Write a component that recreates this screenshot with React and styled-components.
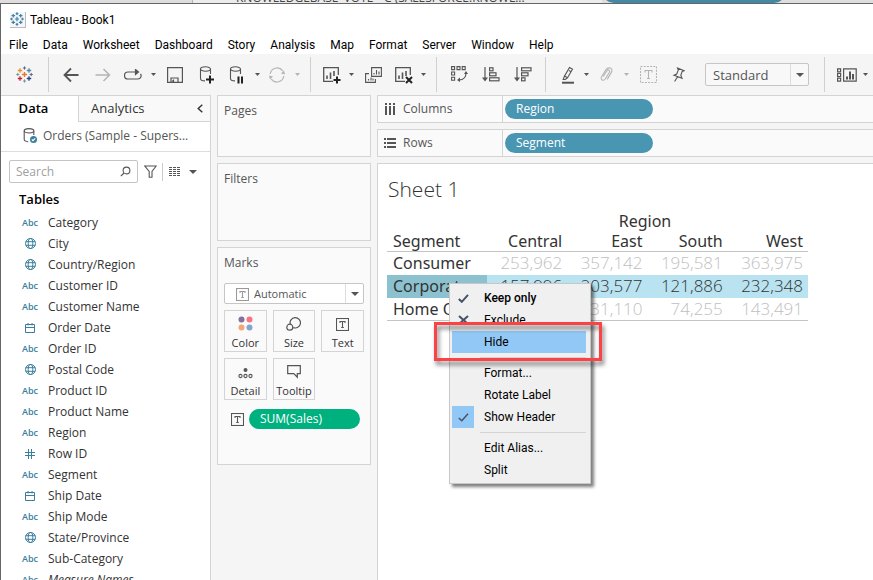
import React from "react";
import styled, { createGlobalStyle, css } from "styled-components";

const SANS = '"Open Sans", "Noto Sans", sans-serif';
const MENU = 'Roboto, "Noto Sans", sans-serif';
const LINE = "#d4d4d4";
const INK = "#555";
const BLUE = "#3b7e9c";

const GlobalStyle = createGlobalStyle`
  * { box-sizing: border-box; }
  body { margin: 0; overflow: hidden; background: #fff; font: 12px/16px ${SANS}; color: #333; }
  button, input, select { font: inherit; color: inherit; margin: 0; padding: 0; }
  button { background: none; border: 0; }
  svg { display: block; flex: none; }
  h1, h2, ul { margin: 0; padding: 0; list-style: none; font-weight: 400; }
`;

const Page = styled.div`
  height: 100vh;
  display: flex;
  flex-direction: column;
  overflow: hidden;
`;
const Behind = styled.div`
  flex: none;
  height: 3px;
  display: flex;
  align-items: flex-end;
  overflow: hidden;
  background: #dedede;
`;
const BehindShelf = styled.div`
  flex: 0 0 410px;
  margin-left: 192px;
  height: 24px;
  padding-left: 43px;
  border-left: 1px solid #b5b5b5;
  line-height: 38px;
  background: #ececec;
  color: #444;
  white-space: nowrap;
`;
const BehindPill = styled.div`
  flex: 0 0 184px;
  height: 24px;
  border-radius: 12px;
  background: #4389a5;
`;
const Window = styled.div`
  flex: 1;
  min-height: 0;
  display: flex;
  flex-direction: column;
  border-top: 1px solid #666;
  border-left: 1px solid #666;
  background: #fff;
`;
const TitleBar = styled.header`
  flex: none;
  height: 31px;
  display: flex;
  align-items: center;
  gap: 4px;
  padding: 0 9px;
  font: 12px/16px ${MENU};
  color: #000;
`;
const AppIcon = styled.span`
  padding: 0 1px 1px 0;
  background: #f6f6f6;
  border: solid #bbb;
  border-width: 0 1px 1px 0;
`;
const MenuBar = styled.nav`
  flex: none;
  height: 19px;
  display: flex;
  align-items: center;
  gap: 15px;
  padding: 0 8px;
  font: 12px/16px ${MENU};
  color: #000;
`;
const Toolbar = styled.div`
  flex: none;
  height: 41px;
  display: flex;
  align-items: center;
  padding-left: 11px;
  background: #f5f5f5;
  color: ${INK};
`;
const Tool = styled.button`
  flex: none;
  width: 24px;
  height: 24px;
  display: grid;
  place-items: center;
  margin-left: ${(p) => p.$gap || 0}px;
  color: ${(p) => (p.disabled ? "#b4b4b4" : INK)};
`;
const CaretButton = styled(Tool)`
  width: 12px;
`;
const Divider = styled.span`
  flex: none;
  width: 1px;
  height: 35px;
  margin-left: ${(p) => p.$gap}px;
  background: #d0d0d0;
`;
const SelectBox = styled.label`
  position: relative;
  flex: none;
  display: block;
  height: ${(p) => (p.$compact ? 21 : 23)}px;
  width: ${(p) => (p.$compact ? "auto" : "104px")};
  margin-left: ${(p) => p.$gap || 0}px;
  border: 1px solid #c6c6c6;
  border-radius: 2px;
  background: ${(p) => (p.$compact ? "#fff" : "#f8f8f8")};
  select {
    appearance: none;
    width: 100%;
    height: 100%;
    padding: 0 20px 0 ${(p) => (p.$compact ? 29 : 7)}px;
    border: 0;
    background: transparent;
    font-size: ${(p) => (p.$compact ? 11 : 13)}px;
    color: ${INK};
  }
`;
const SelectArrow = styled.span`
  position: absolute;
  inset: 0 0 0 auto;
  width: 18px;
  display: grid;
  place-items: center;
  border-left: 1px solid #ddd;
  color: ${INK};
  pointer-events: none;
`;
const SelectIcon = styled.span`
  position: absolute;
  left: 11px;
  top: 4px;
  color: #999;
  pointer-events: none;
`;

const Workspace = styled.div`
  flex: 1;
  min-height: 0;
  display: grid;
  grid-template-columns: 210px 154px minmax(0, 1fr);
  gap: 6px;
  background: #f5f5f5;
`;
const Sidebar = styled.aside`
  min-height: 0;
  overflow: hidden;
  background: #fff;
  border: solid ${LINE};
  border-width: 1px 1px 0 0;
`;
const Tabs = styled.div`
  display: flex;
  height: 26px;
  font-size: 13px;
  line-height: 24px;
`;
const DataTab = styled.button`
  width: 77px;
  padding: 0 12px 2px 0;
  font-weight: 600;
  color: #000;
`;
const AnalyticsTab = styled.div`
  flex: 1;
  display: flex;
  justify-content: space-between;
  align-items: center;
  padding: 0 7px 1px 12px;
  border: solid ${LINE};
  border-width: 0 0 1px 1px;
  background: #f9f9f9;
`;
const Source = styled.div`
  height: 30px;
  display: flex;
  align-items: center;
  gap: 5px;
  padding: 0 0 2px 22px;
  border-bottom: 1px solid #ddd;
  color: #555;
`;
const SearchRow = styled.div`
  display: flex;
  align-items: center;
  gap: 6px;
  padding: 8px 8px 4px;
  color: ${INK};
`;
const SearchBox = styled.label`
  width: 129px;
  height: 23px;
  display: flex;
  align-items: center;
  padding: 0 6px;
  border: 1px solid #c4c4c4;
  border-radius: 2px;
  input {
    flex: 1;
    min-width: 0;
    border: 0;
    outline: 0;
    background: none;
  }
  input::placeholder { color: #a0a0a0; }
`;
const SearchTool = styled.button`
  width: 12px;
  height: 20px;
  display: grid;
  place-items: center;
  color: ${INK};
`;
const SearchDivider = styled.span`
  width: 1px;
  height: 18px;
  background: #ccc;
`;
const TablesHeading = styled.h2`
  padding: 2px 0 3px 18px;
  font-size: 13px;
  line-height: 20px;
  font-weight: 600;
  color: #000;
`;
const Field = styled.li`
  height: 21px;
  display: grid;
  grid-template-columns: 18px 1fr;
  align-items: center;
  column-gap: 9px;
  padding-left: 20px;
  font-style: ${(p) => (p.$italic ? "italic" : "normal")};
  white-space: nowrap;
`;
const FieldIcon = styled.span`
  display: grid;
  place-items: center;
  color: ${BLUE};
  font: 600 9px/12px ${SANS};
`;

const Cards = styled.div`
  display: flex;
  flex-direction: column;
  gap: 6px;
`;
const Card = styled.section`
  flex: none;
  min-height: ${(p) => p.$height}px;
  padding: 7px 6px;
  border: 1px solid ${LINE};
  background: #fafafa;
  color: #555;
  h2 { font-size: 12px; }
`;
const MarkGrid = styled.div`
  display: grid;
  grid-template-columns: repeat(3, 1fr);
  gap: 6px;
  margin: 6px 0;
`;
const MarkButton = styled.button`
  height: 42px;
  display: flex;
  flex-direction: column;
  align-items: center;
  justify-content: flex-end;
  gap: 4px;
  border: 1px solid ${LINE};
  color: ${INK};
  font-size: 11px;
  span { color: #333; }
`;
const MarksSelectWrap = styled.div`
  margin-top: 12px;
`;
const PillRow = styled.div`
  display: flex;
  align-items: center;
  gap: 5px;
  padding: 3px 4px 0 7px;
`;
const Pill = styled.button`
  flex: ${(p) => (p.$green ? "1" : "0 0 148px")};
  height: 20px;
  padding: 0 11px;
  border-radius: 10px;
  background: ${(p) => (p.$green ? "#00b180" : "#4996b2")};
  color: #fff;
  font-weight: 500;
  text-align: left;
`;

const Main = styled.main`
  display: flex;
  flex-direction: column;
  gap: 6px;
  min-width: 0;
`;
const Shelf = styled.section`
  flex: none;
  height: 28px;
  display: flex;
  align-items: center;
  border: solid ${LINE};
  border-width: 1px 0 1px 1px;
  background: #fafafa;
`;
const ShelfLabel = styled.div`
  flex: 0 0 125px;
  height: 100%;
  display: flex;
  align-items: center;
  gap: 7px;
  margin-right: 2px;
  padding-left: 6px;
  border-right: 1px solid ${LINE};
  color: #555;
`;
const Sheet = styled.section`
  position: relative;
  flex: 1;
  padding: 13px 9px;
  border: solid ${LINE};
  border-width: 1px 0 0 1px;
  background: #fff;
`;
const SheetTitle = styled.h1`
  padding-left: 1px;
  font: 300 21px/24px "Open Sans", sans-serif;
`;
const Crosstab = styled.table`
  width: 421px;
  margin-top: 10px;
  border-collapse: collapse;
  table-layout: fixed;
  font: 16px/20px "Noto Sans", sans-serif;
  color: #333;
  border-bottom: 1px solid #c4c4c4;
  thead tr:last-child { border-bottom: 1px solid #c4c4c4; }
`;
const HeadCell = styled.th`
  height: 20px;
  width: ${(p) => (p.$first ? "100px" : "auto")};
  padding: ${(p) => (p.$first ? "0 0 0 6px" : "0 5px 0 0")};
  text-align: ${(p) => p.$align || "right"};
  font-weight: 400;
`;
const RowHead = styled.th`
  height: 23px;
  padding: 0 0 0 6px;
  text-align: left;
  font-weight: 400;
  white-space: nowrap;
  background: ${(p) => (p.$on ? "#8cc2d0" : "none")};
`;
const Value = styled.td`
  padding: 0 5px 0 0;
  text-align: right;
  font: 300 17px/20px "Open Sans", sans-serif;
  color: ${(p) => (p.$on ? "#333" : "#c0c0c0")};
  background: ${(p) => (p.$on ? "#b9e3f0" : "none")};
`;

const ContextMenu = styled.div`
  position: absolute;
  left: 71px;
  top: 119px;
  width: 142px;
  padding: 3px 4px 2px 2px;
  border: 1px solid #c8c8c8;
  background: #f0f0f0;
  box-shadow: 3px 3px 3px rgba(0, 0, 0, 0.5);
  font: 12px/16px ${MENU};
  color: #000;
`;
const MenuItem = styled.button`
  position: relative;
  width: 100%;
  height: 22px;
  display: grid;
  grid-template-columns: 22px 1fr;
  align-items: center;
  column-gap: 10px;
  text-align: left;
  font-weight: ${(p) => (p.$bold ? 500 : 400)};
  ${(p) => p.$active && css`background: #91c8f6;`}
`;
const MenuMark = styled.span`
  width: 22px;
  height: 22px;
  display: grid;
  place-items: center;
  color: #465266;
  background: ${(p) => (p.$on ? "#91c8f6" : "none")};
`;
const MenuRule = styled.div`
  height: 1px;
  margin: 4px 0 4px 28px;
  background: #d4d4d4;
`;
const Callout = styled.span`
  position: absolute;
  z-index: 1;
  inset: -9px -16px -8px -18px;
  border: 3px solid #fb4245;
  filter: drop-shadow(2px 4px 2px rgba(0, 0, 0, 0.5));
  pointer-events: none;
`;

/* ---------- icons ---------- */
const Svg = ({ w = 16, h = w, children, sw = 1.3, ...rest }) => (
  <svg width={w} height={h} viewBox={`0 0 ${w} ${h}`} fill="none" stroke="currentColor" strokeWidth={sw} aria-hidden="true" {...rest}>
    {children}
  </svg>
);
const Caret = ({ w = 5 }) => (
  <svg width={w} height={w === 5 ? 3 : 4} viewBox="0 0 8 4" preserveAspectRatio="none" fill="currentColor" aria-hidden="true">
    <path d="M0 0h8L4 4z" />
  </svg>
);
const plus = (x, y, r) => `M${x - r} ${y}h${2 * r}M${x} ${y - r}v${2 * r}`;
const CROSSES = [
  [8.5, 8.5, 2.6, "#e8762d", 1.4],
  [4, 4.5, 2.2, "#eb912c", 1.3],
  [13, 4.5, 2.2, "#59879b", 1.3],
  [4, 12.5, 2.2, "#c72035", 1.3],
  [13, 12.5, 2.2, "#1f447e", 1.3],
  [8.5, 2, 1.6, "#5b6591", 1],
  [8.5, 15, 1.6, "#7099a6", 1],
  [1.8, 8.5, 1.6, "#7099a6", 1],
  [15.2, 8.5, 1.6, "#5b6591", 1],
];
const Logo = ({ mono }) => (
  <svg width={mono ? 14 : 17} height={mono ? 14 : 17} viewBox="0 0 17 17" fill="none" aria-hidden="true">
    {CROSSES.map(([x, y, r, c, s]) => (
      <path key={`${x}-${y}`} d={plus(x, y, r)} stroke={mono ? "#3d83b0" : c} strokeWidth={mono ? 1.5 : s} />
    ))}
  </svg>
);
const Back = () => <Svg w={16} sw={1.8}><path d="M15.5 8H1.5M8 1.5L1.5 8L8 14.5" /></Svg>;
const Forward = () => <Svg w={16} sw={1.5}><path d="M.5 8h14M8.5 2l6 6l-6 6" /></Svg>;
const Redo = () => (
  <Svg w={18} h={12} sw={1.2}>
    <path d="M13 3H4a3.5 3.5 0 0 0 0 7h10a3.3 3.3 0 0 0 2.5-5.2" />
    <path d="M11.5 .5L14.5 3L11.5 5.5z" fill="currentColor" />
  </Svg>
);
const Save = () => <Svg w={16} sw={1.2}><path d="M.6.6h14.8v14.8H.6zM4 15v-4h7v4M6 13v2" /><path d="M6.5 12.5v2.5" sw={2} /></Svg>;
const Cylinder = ({ children }) => (
  <Svg w={18} sw={1.1}>
    <ellipse cx="7.5" cy="3" rx="5" ry="2.2" />
    <path d="M2.5 3v9.5c0 1.5 2 2.4 4.5 2.4M12.5 3v5" />
    {children}
  </Svg>
);
const AddData = () => <Cylinder><path d="M12 9.5v8M8 13.5h8" stroke="#222" strokeWidth="2" /></Cylinder>;
const PauseData = () => <Cylinder><path d="M10.5 10.5v7M14 10.5v7" stroke="#222" strokeWidth="2" /></Cylinder>;
const Refresh = () => (
  <Svg w={18} sw={1.2}>
    <path d="M2.2 8a7 7 0 0 1 12.5-3.2M15.8 10a7 7 0 0 1-12.5 3.2" />
    <path d="M17 8.5l-4-1l3-3zM1 9.5l4 1l-3 3z" fill="currentColor" stroke="none" />
  </Svg>
);
const ChartBox = ({ children }) => (
  <Svg w={19} h={18} sw={1.3}>
    <path d="M11 15.4H1.7V1.7H16.3V9" />
    <path d="M5 13V9.5M8.5 13V6.5M12 10V5" strokeWidth="1.6" />
    {children}
  </Svg>
);
const NewSheet = () => <ChartBox><path d="M15 10.5v7M11.5 14h7" stroke="#222" strokeWidth="2" /></ChartBox>;
const ClearSheet = () => <ChartBox><path d="M12 11l6 6M18 11l-6 6" stroke="#222" strokeWidth="2" /></ChartBox>;
const Duplicate = () => (
  <Svg w={17} h={16} sw={1.1}>
    <path d="M6.6.6h9.8v8.8H6.6zM4 6.6H.6v8.8h9.8V12" />
    <path d="M9 7.5V6M11.5 7.5V3M14 7.5V4.5M3.5 13.5V12M6 13.5V10.5M8 13.5v-2" />
  </Svg>
);
const Swap = () => (
  <Svg w={17} sw={1.1}>
    <path d="M.6.6h3v3h-3zM6 .6h3v3H6zM11.2.6h3v3h-3zM.6 6h3v3h-3zM.6 11.2h3v3h-3z" />
    <path d="M15 7c0 4.5-2.5 6.8-7 7" />
    <path d="M13 8l2-3l2 3zM9 11.5l-3 2.5l3 2z" fill="currentColor" stroke="none" />
  </Svg>
);
const Sort = ({ desc }) => {
  const widths = desc ? [10, 7, 4] : [4, 7, 10];
  return (
    <Svg w={18} h={15} sw={1.2}>
      <path d="M3 0v13" />
      <path d="M0 10.5h6L3 14.5z" fill="currentColor" stroke="none" />
      {widths.map((w, i) => <rect key={i} x="7.6" y={0.8 + i * 5} width={w - 0.6} height="3" />)}
    </Svg>
  );
};
const Highlighter = () => (
  <Svg w={14} h={18} sw={1.1}>
    <path d="M8.5 1.5l3 1.7l-5 8.6l-3-1.7zM3.5 10l-1.3 3.5h2l2.3-1.7M8 4.5l2 1.2" />
    <path d="M1 16.7h12" strokeWidth="2" />
  </Svg>
);
const Clip = () => <Svg w={13} h={15} sw={1.1}><path d="M3.3 9.5L7 3.8c1.2-1.8 3.5-.4 2.4 1.5L5.4 11.8c-2 2.8-5.4.8-3.8-2L6 2.6C7.7.1 11 .5 11.8 2.4c.4 1 .2 2-.4 3l-4.2 7" /></Svg>;
const TextGlyph = ({ dashed, w = 13 }) => (
  <Svg w={w} sw={1.1}>
    <rect x=".5" y=".5" width={w - 1} height={w - 1} strokeDasharray={dashed ? "2 1.2" : undefined} />
    <path d={dashed ? "M5 6.5V4.5h7v2M8.5 4.5v8M7 12.5h3" : "M4 5V3.5h5V5M6.5 3.5v6M5.2 9.5h2.6"} />
  </Svg>
);
const PinIcon = () => <Svg w={13} h={15} sw={1.1}><path d="M5.5 1l6.5 2.7l-1.8.7l-1.4 3.8l1.2 3L2 8.2l2.7-1.2l1.6-3.9zM5.6 9.7L2.6 14.5" /></Svg>;
const ShowMe = () => (
  <Svg w={20} h={14} sw={1.2}>
    <path d="M.6.8h3v3h-3zM.6 5.5h3v3h-3zM.6 10.2h3v3h-3zM6.6.8h12.6v12.4H6.6z" />
    <path d="M10 11.5V8.5M13 11.5V3.5M16 11.5V6" strokeWidth="2" />
  </Svg>
);
const Globe = () => (
  <Svg w={11} sw={1}>
    <circle cx="5.5" cy="5.5" r="5" />
    <ellipse cx="5.5" cy="5.5" rx="2.3" ry="5" />
    <path d="M.8 3.7h9.4M.8 7.3h9.4" />
  </Svg>
);
const Calendar = () => <Svg w={10} sw={1}><path d="M.5 1.5h9v8h-9zM.5 4.5h9M3 0v2.5M7 0v2.5" /></Svg>;
const Hash = () => <Svg w={10} sw={1}><path d="M3.5 0v10M6.5 0v10M0 3.5h10M0 6.5h10" /></Svg>;
const SourceIcon = () => (
  <Svg w={15} h={16} sw={1.1}>
    <ellipse cx="6" cy="2.8" rx="4.8" ry="2.2" />
    <path d="M1.2 2.8v8.5c0 1.4 1.6 2.2 4 2.4M10.8 2.8V7" />
    <circle cx="10.5" cy="11.5" r="3.5" fill={BLUE} stroke="none" />
    <path d="M8.8 11.5l1.2 1.2l2.2-2.3" stroke="#fff" />
  </Svg>
);
const Magnifier = () => <Svg w={11} sw={1.1}><circle cx="6.5" cy="4.5" r="3.4" /><path d="M4 7L.8 10.2" /></Svg>;
const Funnel = () => <Svg w={13} sw={1.1}><path d="M.8 1h11.4L8 6.5v5.8H5.2V6.5z" /></Svg>;
const ListIcon = () => <Svg w={12} h={10} sw={1}><path d="M0 .5h12M0 2.5h12M0 4.5h12M0 6.5h12M0 8.5h12" strokeDasharray="3 1" /></Svg>;
const Chevron = () => <Svg w={6} h={9} sw={1.4}><path d="M5.3.7L1.2 4.5l4.1 3.8" /></Svg>;
const ColumnsIcon = () => <Svg w={12} sw={2}><path d="M2 0v2M6 0v2M10 0v2M2 3v9M6 3v9M10 3v9" /></Svg>;
const RowsIcon = () => <Svg w={12} h={10} sw={2}><path d="M0 1h2M0 5h2M0 9h2M3 1h9M3 5h9M3 9h9" /></Svg>;
const Colors = () => (
  <Svg w={15} stroke="none">
    <circle cx="3.5" cy="3.5" r="3" fill="#86719b" /><circle cx="11.5" cy="3.5" r="3" fill="#fb7281" />
    <circle cx="3.5" cy="11.5" r="3" fill="#f3a678" /><circle cx="11.5" cy="11.5" r="3" fill="#82a6cb" />
  </Svg>
);
const SizeIcon = () => <Svg w={15} sw={1.2}><path d="M4.3 8.3a5.2 5.2 0 1 1 3 3.3" /><circle cx="3.8" cy="11.2" r="3" /></Svg>;
const DetailIcon = () => (
  <Svg w={15} h={13} sw={1.1}>
    <circle cx="7.5" cy="4" r="2" fill="currentColor" stroke="none" />
    <circle cx="2.5" cy="10" r="1.6" /><circle cx="7.5" cy="10" r="1.6" /><circle cx="12.5" cy="10" r="1.6" />
  </Svg>
);
const TooltipIcon = () => <Svg w={14} h={15} sw={1.2}><path d="M.7 1.6h12.6v8h-3v3.6l-3.5-3.6H.7z" /></Svg>;
const Check = ({ bold }) => <Svg w={11} h={9} sw={bold ? 2 : 1.5}><path d="M.8 5l3 2.8L10 .8" /></Svg>;
const Cross = () => <Svg w={11} h={10} sw={2}><path d="M1 1l9 8M10 1L1 9" /></Svg>;

/* ---------- data ---------- */
const MENUS = ["File", "Data", "Worksheet", "Dashboard", "Story", "Analysis", "Map", "Format", "Server", "Window", "Help"];
const FIELDS = [
  ["Category"], ["City", Globe], ["Country/Region", Globe], ["Customer ID"], ["Customer Name"],
  ["Order Date", Calendar], ["Order ID"], ["Postal Code", Globe], ["Product ID"], ["Product Name"],
  ["Region"], ["Row ID", Hash], ["Segment"], ["Ship Date", Calendar], ["Ship Mode"],
  ["State/Province", Globe], ["Sub-Category"], ["Measure Names", null, true],
];
const MARKS = [["Color", Colors], ["Size", SizeIcon], ["Text", TextGlyph], ["Detail", DetailIcon], ["Tooltip", TooltipIcon]];
const REGIONS = ["Central", "East", "South", "West"];
const ROWS = [
  ["Consumer", ["253,962", "357,142", "195,581", "363,975"]],
  ["Corporate", ["157,996", "203,577", "121,886", "232,348"], true],
  ["Home Office", ["91,213", "131,110", "74,255", "143,491"]],
];

const DropCaret = ({ gap, label, disabled }) => (
  <CaretButton $gap={gap} disabled={disabled} aria-label={label}><Caret /></CaretButton>
);

export default function App() {
  return (
    <Page>
      <GlobalStyle />
      <Behind>
        <BehindShelf>KNOWLEDGEBASE_VOTE__C (SALESFORCE.KNOWL...</BehindShelf>
        <BehindPill />
      </Behind>
      <Window>
        <TitleBar><AppIcon><Logo mono /></AppIcon>Tableau - Book1</TitleBar>
        <MenuBar>{MENUS.map((m) => <button key={m}>{m}</button>)}</MenuBar>
        <Toolbar>
          <Tool aria-label="Start page"><Logo /></Tool>
          <Divider $gap={12} />
          <Tool $gap={10} aria-label="Undo"><Back /></Tool>
          <Tool $gap={8} disabled aria-label="Redo"><Forward /></Tool>
          <Tool $gap={6} aria-label="Replay"><Redo /></Tool>
          <DropCaret gap={2} label="Replay options" />
          <Tool $gap={4} aria-label="Save"><Save /></Tool>
          <Tool $gap={8} aria-label="New data source"><AddData /></Tool>
          <Tool $gap={6} aria-label="Pause auto updates"><PauseData /></Tool>
          <DropCaret gap={2} label="Pause options" />
          <Tool $gap={2} disabled aria-label="Run update"><Refresh /></Tool>
          <DropCaret gap={2} label="Update options" disabled />
          <Divider $gap={7} />
          <Tool $gap={8} aria-label="New worksheet"><NewSheet /></Tool>
          <DropCaret gap={2} label="New options" />
          <Tool $gap={4} aria-label="Duplicate"><Duplicate /></Tool>
          <Tool $gap={6} aria-label="Clear sheet"><ClearSheet /></Tool>
          <DropCaret gap={2} label="Clear options" />
          <Divider $gap={7} />
          <Tool $gap={10} aria-label="Swap rows and columns"><Swap /></Tool>
          <Tool $gap={8} aria-label="Sort ascending"><Sort /></Tool>
          <Tool $gap={8} aria-label="Sort descending"><Sort desc /></Tool>
          <Divider $gap={10} />
          <Tool $gap={10} aria-label="Highlight"><Highlighter /></Tool>
          <DropCaret label="Highlight options" />
          <Tool $gap={2} disabled aria-label="Group members"><Clip /></Tool>
          <DropCaret gap={2} label="Group options" disabled />
          <Tool $gap={4} disabled aria-label="Show mark labels"><TextGlyph dashed w={17} /></Tool>
          <Tool $gap={6} aria-label="Fix axes"><PinIcon /></Tool>
          <SelectBox $gap={15}>
            <select aria-label="Fit"><option>Standard</option></select>
            <SelectArrow><Caret w={8} /></SelectArrow>
          </SelectBox>
          <Divider $gap={15} />
          <Tool $gap={10} aria-label="Show Me"><ShowMe /></Tool>
          <DropCaret gap={0} label="Show Me options" />
        </Toolbar>

        <Workspace>
          <Sidebar>
            <Tabs>
              <DataTab>Data</DataTab>
              <AnalyticsTab><button>Analytics</button><button aria-label="Collapse"><Chevron /></button></AnalyticsTab>
            </Tabs>
            <Source><SourceIcon />Orders (Sample - Supers...</Source>
            <SearchRow>
              <SearchBox><input placeholder="Search" aria-label="Search fields" /><Magnifier /></SearchBox>
              <SearchTool aria-label="Filter fields"><Funnel /></SearchTool>
              <SearchDivider />
              <SearchTool aria-label="View"><ListIcon /></SearchTool>
              <SearchTool aria-label="View options"><Caret w={8} /></SearchTool>
            </SearchRow>
            <TablesHeading>Tables</TablesHeading>
            <ul>
              {FIELDS.map(([name, Icon, italic]) => (
                <Field key={name} $italic={italic}>
                  <FieldIcon>{Icon ? <Icon /> : "Abc"}</FieldIcon>
                  {name}
                </Field>
              ))}
            </ul>
          </Sidebar>

          <Cards>
            <Card $height={62}><h2>Pages</h2></Card>
            <Card $height={78}><h2>Filters</h2></Card>
            <Card $height={218}>
              <h2>Marks</h2>
              <MarksSelectWrap>
                <SelectBox $compact>
                  <SelectIcon><TextGlyph w={13} /></SelectIcon>
                  <select aria-label="Mark type"><option>Automatic</option></select>
                  <SelectArrow><Caret w={8} /></SelectArrow>
                </SelectBox>
              </MarksSelectWrap>
              <MarkGrid>
                {MARKS.map(([name, Icon]) => <MarkButton key={name}><Icon /><span>{name}</span></MarkButton>)}
              </MarkGrid>
              <PillRow><TextGlyph /><Pill $green>SUM(Sales)</Pill></PillRow>
            </Card>
          </Cards>

          <Main>
            <Shelf><ShelfLabel><ColumnsIcon />Columns</ShelfLabel><Pill>Region</Pill></Shelf>
            <Shelf><ShelfLabel><RowsIcon />Rows</ShelfLabel><Pill>Segment</Pill></Shelf>
            <Sheet>
              <SheetTitle>Sheet 1</SheetTitle>
              <Crosstab>
                <thead>
                  <tr><HeadCell $first /><HeadCell colSpan={4} $align="center">Region</HeadCell></tr>
                  <tr>
                    <HeadCell $first $align="left">Segment</HeadCell>
                    {REGIONS.map((r) => <HeadCell key={r}>{r}</HeadCell>)}
                  </tr>
                </thead>
                <tbody>
                  {ROWS.map(([name, values, on]) => (
                    <tr key={name}>
                      <RowHead $on={on}>{name}</RowHead>
                      {values.map((v) => <Value key={v} $on={on}>{v}</Value>)}
                    </tr>
                  ))}
                </tbody>
              </Crosstab>
              <ContextMenu role="menu">
                <MenuItem $bold><MenuMark><Check bold /></MenuMark>Keep only</MenuItem>
                <MenuItem><MenuMark><Cross /></MenuMark>Exclude</MenuItem>
                <MenuItem $active><MenuMark />Hide<Callout /></MenuItem>
                <MenuRule />
                <MenuItem><MenuMark />Format...</MenuItem>
                <MenuItem><MenuMark />Rotate Label</MenuItem>
                <MenuItem><MenuMark $on><Check /></MenuMark>Show Header</MenuItem>
                <MenuRule />
                <MenuItem><MenuMark />Edit Alias...</MenuItem>
                <MenuItem><MenuMark />Split</MenuItem>
              </ContextMenu>
            </Sheet>
          </Main>
        </Workspace>
      </Window>
    </Page>
  );
}
